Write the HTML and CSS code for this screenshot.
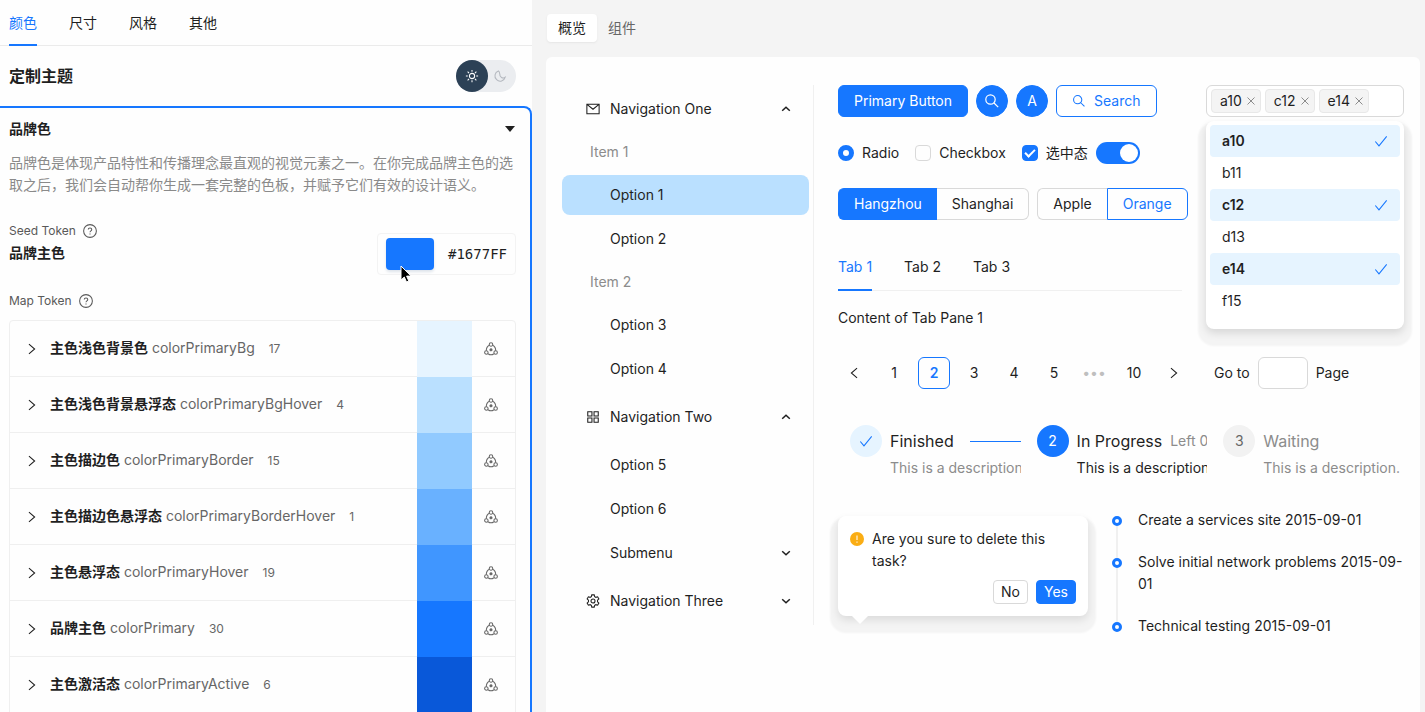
FILE: index.html
```html
<!DOCTYPE html>
<html lang="zh-CN">
<head>
    <meta charset="UTF-8">
    <meta name="viewport" content="width=device-width, initial-scale=1.0">
    <title>定制主题</title>
    <link rel="stylesheet" href="styles.css">
</head>
<body>
    <svg class="sprite" aria-hidden="true">
        <symbol id="i-search" viewBox="0 0 16 16"><circle cx="6.5" cy="6.5" r="4.7"/><path d="M10 10l4.2 4.2"/></symbol>
        <symbol id="i-check" viewBox="0 0 16 16"><path d="M1.5 8.6l4.2 4.9L14.5 2.8"/></symbol>
        <symbol id="i-right" viewBox="0 0 16 16"><path d="M4.5 2.5L11 8l-6.5 5.5"/></symbol>
        <symbol id="i-left" viewBox="0 0 16 16"><path d="M11.5 2.5L5 8l6.5 5.5"/></symbol>
        <symbol id="i-up" viewBox="0 0 12 12"><path d="M2.2 7.8L6 4.2l3.8 3.6"/></symbol>
        <symbol id="i-down" viewBox="0 0 12 12"><path d="M2.2 4.2L6 7.8l3.8-3.6"/></symbol>
        <symbol id="i-close" viewBox="0 0 10 10"><path d="M1.5 1.5l7 7M8.5 1.5l-7 7"/></symbol>
        <symbol id="i-help" viewBox="0 0 16 16"><circle cx="8" cy="8" r="7.300"/><path d="M6 6.4c0-1.2.9-1.9 2-1.9s2 .7 2 1.8c0 1.5-2 1.500-2 3.1"/><path d="M8 10.8v1.300"/></symbol>
        <symbol id="i-share" viewBox="0 0 16 16"><circle cx="8" cy="2.800" r="2"/><circle cx="2.700" cy="12" r="2"/><circle cx="13.300" cy="12" r="2"/><circle class="dot" cx="8" cy="8.900" r="1.200"/><path d="M6.100 3.600C3.800 4.600 2.600 7 2.600 10M9.900 3.600c2.300 1 3.500 3.400 3.500 6.400M4.700 13.400c2 1.500 4.600 1.500 6.600 0"/></symbol>
    </svg>
    <div class="app">
        <aside class="sidebar">
            <nav class="side-tabs">
                <a class="active" href="#color">颜色</a>
                <a href="#size">尺寸</a>
                <a href="#style">风格</a>
                <a href="#other">其他</a>
            </nav>
            <div class="side-head">
                <h1>定制主题</h1>
                <div class="mode">
                    <button class="on" aria-label="亮色">
                        <svg class="icon" viewBox="0 0 16 16"><circle cx="8" cy="8" r="3"/><path d="M8 1v2.200M8 12.800V15M1 8h2.200M12.800 8H15M3 3l1.600 1.600M11.400 11.400L13 13M3 13l1.600-1.600M11.400 4.600L13 3"/></svg>
                    </button>
                    <button aria-label="暗色">
                        <svg class="icon" viewBox="0 0 16 16"><path d="M6.200 2.200A6 6 0 1 0 14 9.400c-1.300.9-3 1-4.300.3-1.500-.8-2.100-2.200-1.900-3.700-.2-1.500-.5-3-1.600-3.800z"/></svg>
                    </button>
                </div>
            </div>
            <section class="token-panel">
                <header class="panel-head">
                    <h2>品牌色</h2>
                    <button class="caret" aria-label="收起"></button>
                </header>
                <p class="desc">品牌色是体现产品特性和传播理念最直观的视觉元素之一。在你完成品牌主色的选取之后，我们会自动帮你生成一套完整的色板，并赋予它们有效的设计语义。</p>
                <div class="seed">
                    <div>
                        <div class="token-label">Seed Token <svg class="icon"><use href="#i-help"/></svg></div>
                        <h3>品牌主色</h3>
                    </div>
                    <button class="picker">
                        <span class="swatch"></span>
                        <span>#1677FF</span>
                        <svg class="pointer" viewBox="0 0 12 18"><path d="M1 1v14l3.300-3 2.200 5 2.300-1-2.200-4.900H11z"/></svg>
                    </button>
                </div>
                <div class="token-label">Map Token <svg class="icon"><use href="#i-help"/></svg></div>
                <ul class="tokens">
                    <li><svg class="icon"><use href="#i-right"/></svg><p><b>主色浅色背景色</b> colorPrimaryBg<small>17</small></p><i class="c1"></i><span><svg class="icon"><use href="#i-share"/></svg></span></li>
                    <li><svg class="icon"><use href="#i-right"/></svg><p><b>主色浅色背景悬浮态</b> colorPrimaryBgHover<small>4</small></p><i class="c2"></i><span><svg class="icon"><use href="#i-share"/></svg></span></li>
                    <li><svg class="icon"><use href="#i-right"/></svg><p><b>主色描边色</b> colorPrimaryBorder<small>15</small></p><i class="c3"></i><span><svg class="icon"><use href="#i-share"/></svg></span></li>
                    <li><svg class="icon"><use href="#i-right"/></svg><p><b>主色描边色悬浮态</b> colorPrimaryBorderHover<small>1</small></p><i class="c4"></i><span><svg class="icon"><use href="#i-share"/></svg></span></li>
                    <li><svg class="icon"><use href="#i-right"/></svg><p><b>主色悬浮态</b> colorPrimaryHover<small>19</small></p><i class="c5"></i><span><svg class="icon"><use href="#i-share"/></svg></span></li>
                    <li><svg class="icon"><use href="#i-right"/></svg><p><b>品牌主色</b> colorPrimary<small>30</small></p><i class="c6"></i><span><svg class="icon"><use href="#i-share"/></svg></span></li>
                    <li><svg class="icon"><use href="#i-right"/></svg><p><b>主色激活态</b> colorPrimaryActive<small>6</small></p><i class="c7"></i><span><svg class="icon"><use href="#i-share"/></svg></span></li>
                </ul>
            </section>
        </aside>

        <main class="preview">
            <div class="segmented">
                <button class="active">概览</button>
                <button>组件</button>
            </div>
            <div class="card">
                <ul class="menu">
                    <li>
                        <a href="#nav1"><svg class="icon" viewBox="0 0 16 16"><path d="M1 2.500h14v11H1zM1.500 3L8 8.300 14.500 3"/></svg>Navigation One<svg class="arrow"><use href="#i-up"/></svg></a>
                        <ul>
                            <li>
                                <div class="group">Item 1</div>
                                <a class="sub selected" href="#o1">Option 1</a>
                                <a class="sub" href="#o2">Option 2</a>
                            </li>
                            <li>
                                <div class="group">Item 2</div>
                                <a class="sub" href="#o3">Option 3</a>
                                <a class="sub" href="#o4">Option 4</a>
                            </li>
                        </ul>
                    </li>
                    <li>
                        <a href="#nav2"><svg class="icon" viewBox="0 0 16 16"><path d="M2 2h4.800v4.800H2zM9.200 2H14v4.800H9.200zM2 9.200h4.800V14H2zM9.200 9.200H14V14H9.200z"/></svg>Navigation Two<svg class="arrow"><use href="#i-up"/></svg></a>
                        <ul>
                            <li><a class="sub" href="#o5">Option 5</a></li>
                            <li><a class="sub" href="#o6">Option 6</a></li>
                            <li><a class="sub" href="#submenu">Submenu<svg class="arrow"><use href="#i-down"/></svg></a></li>
                        </ul>
                    </li>
                    <li>
                        <a href="#nav3"><svg class="icon" viewBox="0 0 16 16"><path d="M6.600 1h2.800l.5 2 1.400.8 2-.6 1.400 2.400L13.200 7.100v1.800l1.500 1.500-1.400 2.400-2-.6-1.400.8-.5 2H6.600l-.5-2-1.400-.8-2 .6-1.400-2.400 1.500-1.500V7.100L1.300 5.600l1.400-2.400 2 .6L6.100 3z"/><circle cx="8" cy="8" r="2.300"/></svg>Navigation Three<svg class="arrow"><use href="#i-down"/></svg></a>
                    </li>
                </ul>

                <div class="demo">
                    <div class="top">
                        <div class="controls">
                            <div class="row buttons">
                                <button class="btn primary">Primary Button</button>
                                <button class="btn primary circle" aria-label="Search"><svg class="icon"><use href="#i-search"/></svg></button>
                                <button class="btn primary circle">A</button>
                                <button class="btn ghost"><svg class="icon"><use href="#i-search"/></svg>Search</button>
                            </div>
                            <div class="row checks">
                                <label><input type="radio" name="r" checked>Radio</label>
                                <label><input type="checkbox">Checkbox</label>
                                <label><input type="checkbox" checked>选中态</label>
                                <input class="switch" type="checkbox" role="switch" aria-label="Switch" checked>
                            </div>
                            <div class="row">
                                <div class="radio-group solid">
                                    <label><input type="radio" name="city" checked><span>Hangzhou</span></label>
                                    <label><input type="radio" name="city"><span>Shanghai</span></label>
                                </div>
                                <div class="radio-group">
                                    <label><input type="radio" name="fruit"><span>Apple</span></label>
                                    <label><input type="radio" name="fruit" checked><span>Orange</span></label>
                                </div>
                            </div>
                            <div class="tabs">
                                <a class="active" href="#t1">Tab 1</a>
                                <a href="#t2">Tab 2</a>
                                <a href="#t3">Tab 3</a>
                            </div>
                            <p class="pane">Content of Tab Pane 1</p>
                        </div>
                        <div class="select">
                            <div class="selector">
                                <span class="tag">a10<button aria-label="Remove a10"><svg><use href="#i-close"/></svg></button></span>
                                <span class="tag">c12<button aria-label="Remove c12"><svg><use href="#i-close"/></svg></button></span>
                                <span class="tag">e14<button aria-label="Remove e14"><svg><use href="#i-close"/></svg></button></span>
                                <input type="text" role="combobox" aria-expanded="true" aria-controls="options" aria-label="Select">
                            </div>
                            <ul class="options" id="options" role="listbox">
                                <li role="option" aria-selected="true">a10<svg class="icon"><use href="#i-check"/></svg></li>
                                <li role="option">b11</li>
                                <li role="option" aria-selected="true">c12<svg class="icon"><use href="#i-check"/></svg></li>
                                <li role="option">d13</li>
                                <li role="option" aria-selected="true">e14<svg class="icon"><use href="#i-check"/></svg></li>
                                <li role="option">f15</li>
                            </ul>
                        </div>
                    </div>

                    <div class="pagination">
                        <button aria-label="Previous"><svg class="icon"><use href="#i-left"/></svg></button>
                        <button>1</button>
                        <button class="active">2</button>
                        <button>3</button>
                        <button>4</button>
                        <button>5</button>
                        <span class="dots">•••</span>
                        <button>10</button>
                        <button aria-label="Next"><svg class="icon"><use href="#i-right"/></svg></button>
                        <label>Go to<input type="text">Page</label>
                    </div>

                    <ol class="steps">
                        <li class="done">
                            <span class="num"><svg class="icon"><use href="#i-check"/></svg></span>
                            <div>
                                <h4>Finished</h4>
                                <p>This is a description.</p>
                            </div>
                        </li>
                        <li class="current">
                            <span class="num">2</span>
                            <div>
                                <h4>In Progress<small>Left 00:00:08</small></h4>
                                <p>This is a description.</p>
                            </div>
                        </li>
                        <li>
                            <span class="num">3</span>
                            <div>
                                <h4>Waiting</h4>
                                <p>This is a description.</p>
                            </div>
                        </li>
                    </ol>

                    <div class="bottom">
                        <div class="confirm">
                            <div class="message">
                                <svg class="icon" viewBox="0 0 16 16"><circle class="warn" cx="8" cy="8" r="8"/><path class="mark" d="M8 4v5M8 10.800v1.400"/></svg>
                                <p>Are you sure to delete this task?</p>
                            </div>
                            <div class="actions">
                                <button class="btn small">No</button>
                                <button class="btn small primary">Yes</button>
                            </div>
                        </div>
                        <ul class="timeline">
                            <li>Create a services site 2015-09-01</li>
                            <li>Solve initial network problems 2015-09-01</li>
                            <li>Technical testing 2015-09-01</li>
                        </ul>
                    </div>
                </div>
            </div>
        </main>
    </div>
</body>
</html>
```
FILE: styles.css
```css
*, *::before, *::after{
    margin: 0;
    padding: 0;
    box-sizing: border-box;
}
body{
    background-color: #f4f4f4;
    color: #1f1f1f;
    font: 14px/22px Inter, "Noto Sans CJK SC", sans-serif;
}
button, input{
    font: inherit;
    color: inherit;
}
button{
    background: none;
    border: none;
    cursor: pointer;
}
a{
    color: inherit;
    text-decoration: none;
}
ul, ol{
    list-style: none;
}
svg{
    fill: none;
    stroke: currentColor;
    flex: none;
}
.sprite{
    display: none;
}
.icon{
    width: 14px;
    height: 14px;
    stroke-width: 1.2;
}
.app{
    display: flex;
    height: 100vh;
    overflow: hidden;
}

/* left panel */
.sidebar{
    flex: 0 0 532px;
    display: flex;
    flex-direction: column;
    background-color: #fefefe;
}
.side-tabs{
    display: flex;
    gap: 32px;
    padding: 0 9px;
    box-shadow: inset 0 -1px #ebebeb;
}
.side-tabs a{
    padding: 12px 0 10px;
    border-bottom: 2px solid transparent;
}
.side-tabs .active{
    color: #1677ff;
    border-color: #1677ff;
}
.side-head{
    display: flex;
    justify-content: space-between;
    align-items: center;
    padding: 14px 16px 14px 9px;
}
h1{
    font-size: 16px;
    font-weight: 600;
}
.mode{
    display: flex;
    background-color: #ebedf0;
    border-radius: 16px;
}
.mode button{
    display: flex;
    align-items: center;
    justify-content: center;
    width: 28px;
    height: 32px;
    padding-right: 4px;
    color: #b4b8bf;
}
.mode .on{
    width: 32px;
    padding: 0;
    border-radius: 50%;
    background-color: #2c4156;
    color: #fff;
}
.token-panel{
    flex: 1 0 auto;
    padding: 10px 14px 0 9px;
    border: 2px solid #1677ff;
    border-left: none;
    border-bottom: none;
    border-radius: 0 8px 0 0;
}
.panel-head{
    display: flex;
    justify-content: space-between;
    align-items: center;
    padding-right: 1px;
}
h2, h3{
    font-size: 14px;
    font-weight: 600;
}
.caret{
    border: 5px solid transparent;
    border-top: 6px solid #1f1f1f;
    border-bottom: none;
}
.desc{
    margin: 12px 0 24px;
    color: #8a8a8a;
}
.seed{
    display: flex;
    justify-content: space-between;
    margin-bottom: 15px;
}
.token-label{
    display: flex;
    align-items: center;
    gap: 7px;
    font-size: 12px;
    color: #595959;
}
.picker{
    position: relative;
    display: flex;
    align-items: center;
    gap: 14px;
    height: 42px;
    margin-top: 13px;
    padding: 0 8px;
    border: 1px solid #f3f3f3;
    border-radius: 4px;
    font-family: "DejaVu Sans Mono", monospace;
}
.swatch{
    width: 48px;
    height: 32px;
    border-radius: 4px;
    background-color: #1677ff;
    box-shadow: 0 2px 3px #dde3ea;
}
.pointer{
    position: absolute;
    left: 22px;
    top: 31px;
    width: 12px;
    height: 18px;
    fill: #000;
    stroke: #fff;
}
.tokens{
    margin-top: 8px;
    border: 1px solid #efefef;
    border-radius: 4px 4px 0 0;
}
.tokens li{
    display: flex;
    align-items: center;
    height: 56px;
    padding-left: 15px;
    border-bottom: 1px solid #efefef;
}
.tokens p{
    flex: 1;
    padding-left: 11px;
    color: #666;
}
.tokens b{
    font-weight: 600;
    color: #1f1f1f;
}
.tokens small{
    margin-left: 14px;
    font-size: 12px;
}
.tokens i{
    width: 55px;
    height: 56px;
}
.tokens span{
    display: flex;
    justify-content: center;
    width: 43px;
    padding-right: 5px;
    color: #666;
}
.dot{
    fill: currentColor;
}
.c1{ background-color: #e6f4ff; }
.c2{ background-color: #bae0ff; }
.c3{ background-color: #91caff; }
.c4{ background-color: #69b1ff; }
.c5{ background-color: #4096ff; }
.c6{ background-color: #1677ff; }
.c7{ background-color: #0958d9; }

/* right side */
.preview{
    flex: 1;
    min-width: 0;
    display: flex;
    flex-direction: column;
    padding: 14px 5px 0 14px;
}
.segmented{
    display: flex;
    margin-bottom: 15px;
    color: #666;
}
.segmented button{
    padding: 3px 11px;
}
.segmented .active{
    margin-left: 1px;
    border-radius: 4px;
    background-color: #fff;
    color: #1f1f1f;
    box-shadow: 0 1px 2px #e6e6e6;
}
.card{
    flex: 1 0 auto;
    display: flex;
    align-items: flex-start;
    gap: 24px;
    padding: 28px 16px 0 12px;
    border-radius: 6px 6px 0 0;
    background-color: #fefefe;
}
.menu{
    display: flow-root;
    flex: 0 0 256px;
    border-right: 1px solid #f0f0f0;
}
.menu ul{
    display: flow-root;
}
.menu a{
    display: flex;
    align-items: center;
    gap: 10px;
    height: 40px;
    margin: 4px;
    padding: 0 17px 0 24px;
    border-radius: 8px;
}
.menu .sub{
    padding-left: 48px;
}
.menu .selected{
    background-color: #bae0ff;
}
.group{
    padding: 8px 32px;
    color: #8c8c8c;
}
.arrow{
    width: 12px;
    height: 12px;
    margin-left: auto;
    stroke-width: 1.5;
}
.demo{
    flex: 1;
    min-width: 0;
}
.top{
    display: flex;
    gap: 24px;
}
.controls{
    flex: 1;
    min-width: 0;
}
.row{
    display: flex;
    gap: 8px;
    margin-bottom: 24px;
    white-space: nowrap;
}
.btn{
    display: flex;
    align-items: center;
    justify-content: center;
    gap: 8px;
    height: 32px;
    padding: 0 15px;
    border: 1px solid #d9d9d9;
    border-radius: 6px;
    background-color: #fff;
}
.primary{
    border-color: #1677ff;
    background-color: #1677ff;
    color: #fff;
}
.circle{
    flex: none;
    width: 32px;
    padding: 0;
    border-radius: 50%;
}
.circle .icon{
    width: 16px;
    height: 16px;
}
.ghost{
    border-color: #1677ff;
    color: #1677ff;
}
.small{
    height: 24px;
    padding: 0 7px;
    border-radius: 4px;
}
.checks{
    align-items: center;
    height: 23px;
}
.checks label{
    display: flex;
    align-items: center;
    gap: 8px;
    margin-right: 8px;
}
.checks label:nth-of-type(3){
    margin-right: 0;
}
.checks input{
    appearance: none;
    width: 16px;
    height: 16px;
    border: 1px solid #d9d9d9;
    border-radius: 4px;
}
.checks input[type="radio"]{
    border: 5px solid #1677ff;
    border-radius: 50%;
}
.checks label input[type="checkbox"]:checked{
    display: flex;
    justify-content: center;
    border-color: #1677ff;
    background-color: #1677ff;
}
.checks label input[type="checkbox"]:checked::before{
    content: "";
    width: 6px;
    height: 10px;
    margin-top: 1px;
    border: solid #fff;
    border-width: 0 2px 2px 0;
    transform: rotate(45deg);
}
.checks .switch{
    display: flex;
    justify-content: flex-end;
    width: 44px;
    height: 22px;
    padding: 2px;
    border: none;
    border-radius: 11px;
    background-color: #1677ff;
}
.switch::before{
    content: "";
    width: 18px;
    height: 18px;
    border-radius: 50%;
    background-color: #fff;
}
.radio-group{
    display: flex;
}
.radio-group input{
    position: absolute;
    opacity: 0;
}
.radio-group span{
    display: block;
    padding: 4px 15px;
    border: 1px solid #d9d9d9;
}
.radio-group label:first-child span{
    border-right: none;
    border-radius: 6px 0 0 6px;
}
.radio-group label:last-child span{
    border-radius: 0 6px 6px 0;
}
.radio-group :checked + span{
    border-color: #1677ff;
    color: #1677ff;
}
.solid label:last-child span{
    border-left: none;
}
.solid :checked + span{
    background-color: #1677ff;
    color: #fff;
}
.tabs{
    display: flex;
    gap: 32px;
    margin-bottom: 16px;
    box-shadow: inset 0 -1px #f0f0f0;
    white-space: nowrap;
}
.tabs a{
    padding: 12px 0 11px;
    border-bottom: 2px solid transparent;
}
.tabs .active{
    color: #1677ff;
    border-color: #1677ff;
}
.select{
    flex: none;
    width: 198px;
}
.selector{
    display: flex;
    align-items: center;
    gap: 4px;
    height: 32px;
    padding: 0 4px;
    border: 1px solid #d9d9d9;
    border-radius: 6px;
    background-color: #fff;
}
.tag{
    display: flex;
    align-items: center;
    gap: 4px;
    height: 24px;
    padding: 0 4px 0 8px;
    border: 1px solid #e8e8e8;
    border-radius: 4px;
    background-color: #f4f4f4;
}
.tag button{
    display: flex;
    color: #8c8c8c;
}
.tag svg{
    width: 10px;
    height: 10px;
}
.selector input{
    flex: 1;
    min-width: 0;
    border: none;
    outline: none;
    background: none;
}
.options{
    margin-top: 4px;
    padding: 4px 4px 12px;
    border-radius: 8px;
    background-color: #fff;
    box-shadow: 0 4px 8px rgba(0,0,0,0.12), 0 9px 2px 8px #f4f4f4;
}
.options li{
    display: flex;
    align-items: center;
    justify-content: space-between;
    height: 32px;
    padding: 0 12px;
    border-radius: 4px;
}
.options [aria-selected]{
    background-color: #e6f4ff;
    font-weight: 600;
}
.options .icon{
    color: #1677ff;
}
.pagination{
    display: flex;
    gap: 8px;
    margin: 28px 0 36px;
}
.pagination button, .dots{
    display: flex;
    align-items: center;
    justify-content: center;
    width: 32px;
    height: 32px;
    border-radius: 6px;
}
.pagination .active{
    border: 1px solid #1677ff;
    color: #1677ff;
    font-weight: 600;
}
.dots{
    color: #bfbfbf;
}
.pagination label{
    display: flex;
    align-items: center;
    gap: 8px;
    margin-left: 16px;
    white-space: nowrap;
}
.pagination input{
    width: 50px;
    height: 32px;
    padding: 0 11px;
    border: 1px solid #d9d9d9;
    border-radius: 6px;
}
.steps{
    display: grid;
    grid-template-columns: minmax(0, 1fr) minmax(0, 1fr) auto;
    gap: 16px;
    margin: 0 4px 30px 12px;
    color: #8c8c8c;
    white-space: nowrap;
}
.steps li{
    display: flex;
    gap: 8px;
    overflow: hidden;
}
.steps li div{
    flex: 1;
    min-width: 0;
}
.num{
    display: flex;
    align-items: center;
    justify-content: center;
    flex: none;
    width: 32px;
    height: 32px;
    border-radius: 50%;
    background-color: #f2f2f2;
    color: #666;
}
.steps h4{
    display: flex;
    align-items: center;
    font-size: 16px;
    font-weight: 400;
    line-height: 32px;
}
.steps small{
    margin-left: 8px;
    font-size: 14px;
    color: #8c8c8c;
}
.done .num{
    background-color: #e6f4ff;
    color: #1677ff;
}
.done h4, .current{
    color: #1f1f1f;
}
.done h4::after{
    content: "";
    flex: 1;
    height: 1px;
    margin-left: 16px;
    background-color: #1677ff;
}
.current .num{
    background-color: #1677ff;
    color: #fff;
}
.bottom{
    display: flex;
    align-items: flex-start;
    gap: 24px;
}
.confirm{
    position: relative;
    flex: 0 0 250px;
    margin-top: 7px;
    padding: 12px;
    border-radius: 8px;
    background-color: #fff;
    box-shadow: 0 4px 8px rgba(0,0,0,0.1), 0 9px 2px 8px #f4f4f4;
}
.confirm::after{
    content: "";
    position: absolute;
    left: 14px;
    top: 100%;
    border: 8px solid transparent;
    border-top-color: #fff;
    border-bottom: none;
}
.message{
    display: flex;
    gap: 8px;
    margin-bottom: 8px;
}
.message .icon{
    margin-top: 4px;
}
.warn{
    fill: #faad14;
    stroke: none;
}
.mark{
    stroke: #fff;
}
.actions{
    display: flex;
    justify-content: flex-end;
    gap: 8px;
}
.timeline{
    flex: 1;
}
.timeline li{
    position: relative;
    padding: 0 0 20px 26px;
}
.timeline li::before{
    content: "";
    position: absolute;
    left: 0;
    top: 7px;
    width: 10px;
    height: 10px;
    border: 3px solid #1677ff;
    border-radius: 50%;
}
.timeline li:not(:last-child)::after{
    content: "";
    position: absolute;
    left: 4px;
    top: 17px;
    bottom: -7px;
    width: 2px;
    background-color: #f0f0f0;
}
```
